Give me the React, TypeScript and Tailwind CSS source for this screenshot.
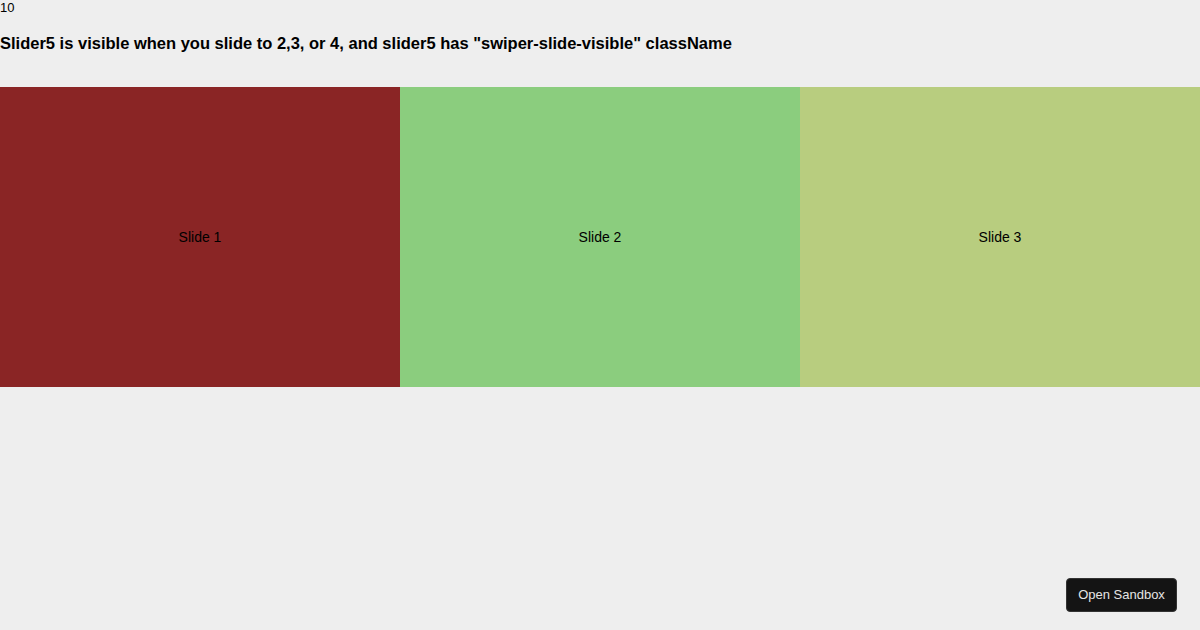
const slides = [
  { label: 'Slide 1', color: 'bg-[#8a2525]' },
  { label: 'Slide 2', color: 'bg-[#8bcd7e]' },
  { label: 'Slide 3', color: 'bg-[#b8cd7f]' },
];

export default function App() {
  return (
    <div className="relative h-[630px] w-[1200px] overflow-hidden bg-[#eeeeee] font-['Liberation_Sans',Arial,sans-serif] text-black">
      <div className="h-[15px] text-[13px] leading-[15px]">10</div>
      <h3 className="mt-[18px] text-[16.5px] leading-5 font-bold">
        Slider5 is visible when you slide to 2,3, or 4, and slider5 has "swiper-slide-visible" className
      </h3>

      {/* Swiper track */}
      <div className="mt-[34px] flex h-[300px]">
        {slides.map(slide => (
          <div
            key={slide.label}
            className={`flex w-[400px] shrink-0 items-center justify-center text-[14px] ${slide.color}`}
          >
            {slide.label}
          </div>
        ))}
      </div>

      <button className="absolute right-[23px] bottom-[18px] h-[34px] w-[111px] rounded-[4px] border border-[#333] bg-[#141414] text-[13px] text-[#e5e5e5]">
        Open Sandbox
      </button>
    </div>
  );
}
